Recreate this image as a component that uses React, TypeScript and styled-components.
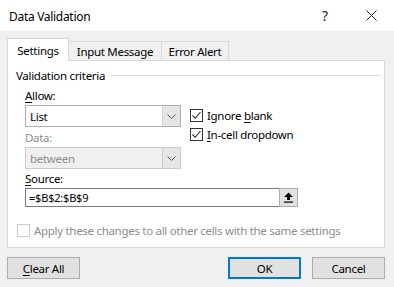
import React from "react";
import styled, { createGlobalStyle } from "styled-components";

const GlobalStyle = createGlobalStyle`
  html, body {
    margin: 0;
    padding: 0;
    background: #ffffff;
  }
  body {
    font-family: "Noto Sans", "Liberation Sans", sans-serif;
    font-size: 11.5px;
    letter-spacing: -0.3px;
    color: #000;
  }
`;

const Dialog = styled.div`
  width: 394px;
  height: 287px;
  display: flex;
  flex-direction: column;
  background: #f0f0f0;
  overflow: hidden;
`;

const TitleBar = styled.div`
  height: 31px;
  flex: none;
  display: flex;
  align-items: center;
  background: #ffffff;
  padding-left: 9px;
`;

const Title = styled.div`
  flex: 1;
  font-size: 12px;
  letter-spacing: -0.3px;
  padding-top: 1px;
`;

const TitleButton = styled.div`
  width: 46px;
  height: 31px;
  display: flex;
  align-items: center;
  justify-content: center;
  font-size: 14px;
  color: #222;
`;

const Body = styled.div`
  flex: 1;
  display: flex;
  flex-direction: column;
  padding: 0 9px 0 7px;
`;

const TabStrip = styled.div`
  height: 30px;
  display: flex;
  align-items: flex-end;
  margin-bottom: -1px;
  position: relative;
  z-index: 1;
`;

const Tab = styled.div<{ $active?: boolean; $w: number }>`
  box-sizing: border-box;
  width: ${(p) => p.$w}px;
  height: ${(p) => (p.$active ? 23 : 20)}px;
  margin-left: ${(p) => (p.$active ? 0 : -1)}px;
  display: flex;
  align-items: center;
  justify-content: center;
  padding-top: ${(p) => (p.$active ? 0 : 1)}px;
  background: ${(p) => (p.$active ? "#ffffff" : "#f0f0f0")};
  border: 1px solid #d9d9d9;
  border-bottom: ${(p) => (p.$active ? "none" : "1px solid #d9d9d9")};
  position: relative;
  z-index: ${(p) => (p.$active ? 2 : 1)};
  white-space: nowrap;
`;

const Panel = styled.div`
  box-sizing: border-box;
  height: 188px;
  background: #ffffff;
  border: 1px solid #d9d9d9;
  padding: 6px 0 0 8px;
  display: flex;
  flex-direction: column;
`;

const GroupHeader = styled.div`
  display: flex;
  align-items: center;
  gap: 6px;
  height: 16px;
  padding-right: 4px;
  &::after {
    content: "";
    flex: 1;
    height: 1px;
    background: #dcdcdc;
  }
`;

const Criteria = styled.div`
  display: flex;
  padding-left: 9px;
  margin-top: 5px;
`;

const LeftColumn = styled.div`
  width: 156px;
  display: flex;
  flex-direction: column;
`;

const RightColumn = styled.div`
  margin-left: 9px;
  padding-top: 18px;
  display: flex;
  flex-direction: column;
`;

const SourceBlock = styled.div`
  display: flex;
  flex-direction: column;
  padding-left: 9px;
  margin-top: 2px;
`;

const FieldLabel = styled.div<{ $disabled?: boolean; $gap?: number }>`
  height: 16px;
  line-height: 16px;
  margin-top: ${(p) => p.$gap ?? 0}px;
  margin-bottom: 1px;
  color: ${(p) => (p.$disabled ? "#8d8d8d" : "#000")};
`;

const Key = styled.span`
  text-decoration: underline;
  text-underline-offset: 2px;
`;

const Select = styled.div<{ $disabled?: boolean }>`
  box-sizing: border-box;
  height: 22px;
  display: flex;
  border: 1px solid ${(p) => (p.$disabled ? "#cccccc" : "#adadad")};
  background: ${(p) => (p.$disabled ? "#f0f0f0" : "#ffffff")};
  color: ${(p) => (p.$disabled ? "#8d8d8d" : "#000")};
`;

const SelectValue = styled.div`
  flex: 1;
  display: flex;
  align-items: center;
  padding-left: 4px;
`;

const SelectArrow = styled.div<{ $disabled?: boolean }>`
  width: 17px;
  display: flex;
  align-items: center;
  justify-content: center;
  background: ${(p) => (p.$disabled ? "#e6e6e6" : "#e5e5e5")};
  border-left: 1px solid ${(p) => (p.$disabled ? "#cccccc" : "#d0d0d0")};
`;

const SourceRow = styled.div`
  box-sizing: border-box;
  width: 273px;
  height: 19px;
  display: flex;
  border: 1px solid #7a7a7a;
  background: #ffffff;
`;

const SourceValue = styled.div`
  flex: 1;
  display: flex;
  align-items: center;
  padding-left: 3px;
  font-size: 11px;
  letter-spacing: -0.2px;
`;

const RefButton = styled.div`
  box-sizing: border-box;
  width: 19px;
  display: flex;
  align-items: center;
  justify-content: center;
  background: #e1e1e1;
  border: 1px solid #adadad;
  margin: -1px -1px -1px 0;
`;

const CheckRow = styled.div<{ $disabled?: boolean }>`
  height: 19px;
  display: flex;
  align-items: center;
  gap: 4px;
  color: ${(p) => (p.$disabled ? "#8d8d8d" : "#000")};
`;

const Box = styled.div<{ $disabled?: boolean }>`
  box-sizing: border-box;
  width: 13px;
  height: 13px;
  border: 1px solid ${(p) => (p.$disabled ? "#cccccc" : "#333333")};
  background: #ffffff;
  display: flex;
  align-items: center;
  justify-content: center;
`;

const ApplyRow = styled.div`
  margin-top: 14px;
  padding-left: 1px;
`;

const Footer = styled.div`
  display: flex;
  align-items: flex-start;
  padding-top: 9px;
`;

const Button = styled.div<{ $primary?: boolean }>`
  box-sizing: border-box;
  width: 73px;
  height: 22px;
  display: flex;
  align-items: center;
  justify-content: center;
  background: #e1e1e1;
  border: ${(p) => (p.$primary ? "2px solid #0078d7" : "1px solid #adadad")};
`;

const Spacer = styled.div`
  flex: 1;
`;

const ButtonGap = styled.div`
  width: 11px;
`;

function Chevron() {
  return (
    <svg width="9" height="5" viewBox="0 0 9 5">
      <path d="M0.5 0.5 L4.5 4.5 L8.5 0.5" fill="none" stroke="#606060" strokeWidth="1" />
    </svg>
  );
}

function Check() {
  return (
    <svg width="11" height="11" viewBox="0 0 11 11">
      <path d="M1.5 5.5 L4.2 8.3 L9.5 2" fill="none" stroke="#222" strokeWidth="1.1" />
    </svg>
  );
}

function CheckBox({ checked, disabled }: { checked?: boolean; disabled?: boolean }) {
  return <Box $disabled={disabled}>{checked && <Check />}</Box>;
}

function RefArrow() {
  return (
    <svg width="11" height="11" viewBox="0 0 11 11">
      <path d="M5.5 0.5 L10 5 L7 5 L7 8 L4 8 L4 5 L1 5 Z" fill="#000" />
      <rect x="1" y="9.5" width="9" height="1.2" fill="#000" />
    </svg>
  );
}

function CloseIcon() {
  return (
    <svg width="11" height="11" viewBox="0 0 11 11">
      <path d="M0.5 0.5 L10.5 10.5 M10.5 0.5 L0.5 10.5" stroke="#222" strokeWidth="1" />
    </svg>
  );
}

export default function App() {
  return (
    <>
      <GlobalStyle />
      <Dialog>
        <TitleBar>
          <Title>Data Validation</Title>
          <TitleButton>?</TitleButton>
          <TitleButton>
            <CloseIcon />
          </TitleButton>
        </TitleBar>
        <Body>
          <TabStrip>
            <Tab $active $w={62}>Settings</Tab>
            <Tab $w={94}>Input Message</Tab>
            <Tab $w={68}>Error Alert</Tab>
          </TabStrip>
          <Panel>
            <GroupHeader>Validation criteria</GroupHeader>
            <Criteria>
              <LeftColumn>
                <FieldLabel>
                  <Key>A</Key>llow:
                </FieldLabel>
                <Select>
                  <SelectValue>List</SelectValue>
                  <SelectArrow>
                    <Chevron />
                  </SelectArrow>
                </Select>
                <FieldLabel $disabled $gap={3}>
                  Data:
                </FieldLabel>
                <Select $disabled>
                  <SelectValue>between</SelectValue>
                  <SelectArrow $disabled>
                    <Chevron />
                  </SelectArrow>
                </Select>
              </LeftColumn>
              <RightColumn>
                <CheckRow>
                  <CheckBox checked />
                  <span>
                    Ignore <Key>b</Key>lank
                  </span>
                </CheckRow>
                <CheckRow>
                  <CheckBox checked />
                  <span>
                    <Key>I</Key>n-cell dropdown
                  </span>
                </CheckRow>
              </RightColumn>
            </Criteria>
            <SourceBlock>
              <FieldLabel>
                <Key>S</Key>ource:
              </FieldLabel>
              <SourceRow>
                <SourceValue>=$B$2:$B$9</SourceValue>
                <RefButton>
                  <RefArrow />
                </RefButton>
              </SourceRow>
            </SourceBlock>
            <ApplyRow>
              <CheckRow $disabled>
                <CheckBox disabled />
                <span>Apply these changes to all other cells with the same settings</span>
              </CheckRow>
            </ApplyRow>
          </Panel>
          <Footer>
            <Button>
              <span>
                <Key>C</Key>lear All
              </span>
            </Button>
            <Spacer />
            <Button $primary>OK</Button>
            <ButtonGap />
            <Button>Cancel</Button>
          </Footer>
        </Body>
      </Dialog>
    </>
  );
}
